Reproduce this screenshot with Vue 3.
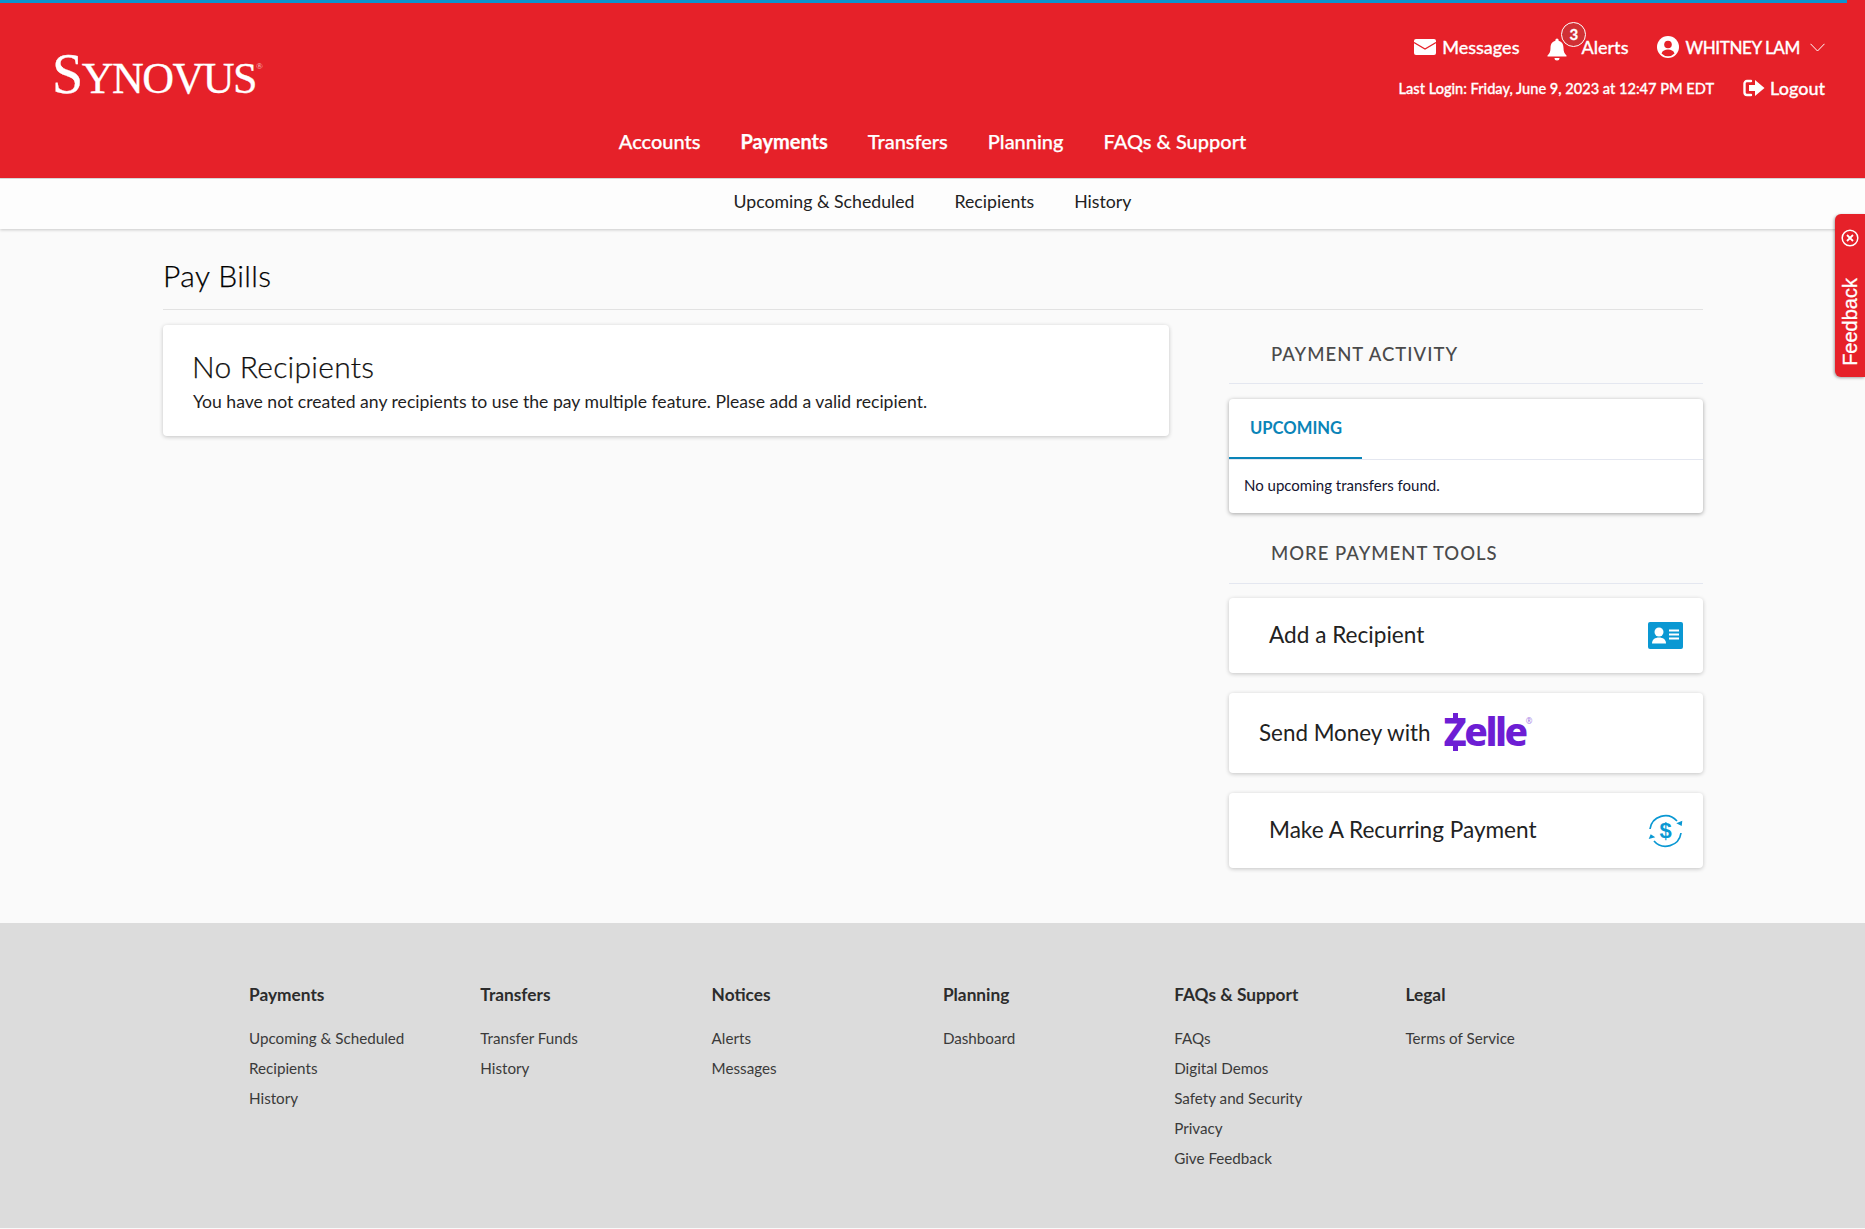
<script setup>
const navItems = ['Accounts', 'Payments', 'Transfers', 'Planning', 'FAQs & Support']
const subItems = ['Upcoming & Scheduled', 'Recipients', 'History']
const footerCols = [
  { title: 'Payments', links: ['Upcoming & Scheduled', 'Recipients', 'History'] },
  { title: 'Transfers', links: ['Transfer Funds', 'History'] },
  { title: 'Notices', links: ['Alerts', 'Messages'] },
  { title: 'Planning', links: ['Dashboard'] },
  { title: 'FAQs & Support', links: ['FAQs', 'Digital Demos', 'Safety and Security', 'Privacy', 'Give Feedback'] },
  { title: 'Legal', links: ['Terms of Service'] }
]
</script>

<template>
  <div class="page">
    <header class="header">
      <div class="top-strip"></div>
      <div class="header-top">
        <div class="logo"><span class="logo-big">S</span>YNOVUS<sup class="logo-reg">®</sup></div>
        <div class="account">
          <div class="account-row">
            <a class="util messages">
              <svg width="22" height="16" viewBox="0 0 22 16">
                <rect width="22" height="16" rx="2" fill="#fff" />
                <path d="M0 3.500 L11 10 L22 3.500" fill="none" stroke="#e62129" stroke-width="1.300" />
              </svg>
              Messages
            </a>
            <a class="util alerts">
              <svg class="bell" width="20" height="24" viewBox="0 0 20 24">
                <path d="M10 1.500a1.600 1.600 0 0 1 1.600 1.600v.7C15 4.600 16.500 7.500 16.500 11c0 3.800 1 5.500 3 7.500v1H.5v-1c2-2 3-3.700 3-7.500 0-3.500 1.500-6.400 4.900-7.200v-.7A1.600 1.600 0 0 1 10 1.500zM7.500 21h5a2.500 2.500 0 0 1-5 0z" fill="#fff" />
              </svg>
              <span class="badge">3</span>
              Alerts
            </a>
            <a class="util user">
              <svg width="22" height="22" viewBox="0 0 22 22">
                <circle cx="11" cy="11" r="11" fill="#fff" />
                <circle cx="11" cy="8.500" r="3.800" fill="#e62129" />
                <path d="M4.500 17.500c1-3 3.500-4 6.500-4s5.500 1 6.500 4a9 9 0 0 1-13 0z" fill="#e62129" />
              </svg>
              <span class="user-name">WHITNEY LAM</span>
              <svg class="chev" width="15" height="9" viewBox="0 0 15 9">
                <path d="M.5 .8 L7.500 8 L14.500 .8" fill="none" stroke="#fff" stroke-width="1" />
              </svg>
            </a>
          </div>
          <div class="account-row second">
            <span class="last-login">Last Login: Friday, June 9, 2023 at 12:47 PM EDT</span>
            <a class="util logout">
              <svg width="22" height="18" viewBox="0 0 22 18">
                <path d="M8 2H4a2.500 2.500 0 0 0-2.500 2.500v9A2.500 2.500 0 0 0 4 16h4" fill="none" stroke="#fff" stroke-width="2.400" stroke-linecap="round" />
                <path d="M6 6h6V1l9.500 8-9.500 8v-5H6z" fill="#fff" />
              </svg>
              Logout
            </a>
          </div>
        </div>
      </div>
      <nav class="main-nav">
        <a v-for="item in navItems" :key="item" :class="{ active: item === 'Payments' }">{{ item }}</a>
      </nav>
    </header>

    <nav class="sub-nav">
      <a v-for="item in subItems" :key="item">{{ item }}</a>
    </nav>

    <div class="feedback">
      <svg width="18" height="18" viewBox="0 0 18 18">
        <circle cx="9" cy="9" r="7.800" fill="none" stroke="#fff" stroke-width="1.500" />
        <path d="M6 6l6 6M12 6l-6 6" stroke="#fff" stroke-width="1.800" />
      </svg>
      <span class="feedback-text">Feedback</span>
    </div>

    <main class="main">
      <h1 class="page-title">Pay Bills</h1>
      <div class="columns">
        <section class="card empty">
          <h2>No Recipients</h2>
          <p>You have not created any recipients to use the pay multiple feature. Please add a valid recipient.</p>
        </section>

        <aside class="side">
          <h3 class="side-title first">PAYMENT ACTIVITY</h3>
          <div class="card activity">
            <div class="tabs"><span class="tab">UPCOMING</span></div>
            <div class="tab-body">No upcoming transfers found.</div>
          </div>

          <h3 class="side-title">MORE PAYMENT TOOLS</h3>
          <a class="card tool">
            <span>Add a Recipient</span>
            <svg class="tool-icon" width="35" height="27" viewBox="0 0 35 27">
              <rect width="35" height="27" rx="2" fill="#0a98d3" />
              <circle cx="11" cy="10" r="4.500" fill="#fff" />
              <path d="M4 21.500c0-4 3-6 7-6s7 2 7 6z" fill="#fff" />
              <path d="M21 8.500h10M21 12.500h10M21 16.500h10" stroke="#fff" stroke-width="2.200" />
            </svg>
          </a>
          <a class="card tool zelle-tool">
            <span>Send Money with</span>
            <span class="zelle"><span class="zelle-z">Z</span>elle<sup>®</sup></span>
          </a>
          <a class="card tool">
            <span>Make A Recurring Payment</span>
            <span class="recur tool-icon">
              <svg width="35" height="34" viewBox="0 0 35 34">
                <path d="M2 15A15.500 15.500 0 0 1 29 7M33 19A15.500 15.500 0 0 1 6 27" fill="none" stroke="#0a98d3" stroke-width="1.700" />
                <path d="M34.300 6.700L33.700 12L28.300 9.300zM.7 25L2.700 20.300L7.300 23.300z" fill="#0a98d3" />
              </svg>
              <span class="dollar">$</span>
            </span>
          </a>
        </aside>
      </div>
    </main>

    <footer class="footer">
      <div v-for="col in footerCols" :key="col.title" class="footer-col">
        <h4>{{ col.title }}</h4>
        <a v-for="link in col.links" :key="link">{{ link }}</a>
      </div>
    </footer>
  </div>
</template>

<style>
html, body {
  margin: 0;
  background: #fff;
}
</style>

<style scoped>
.page {
  position: relative;
  width: 100%;
  height: 1229px;
  overflow: hidden;
  display: flex;
  flex-direction: column;
  background: #fafafa;
  font-family: Lato, "Liberation Sans", sans-serif;
  color: #1f1f1f;
}

.header {
  height: 179px;
  box-sizing: border-box;
  background: #e62129;
  color: #fff;
  border-bottom: 1px solid #ddd;
}

.top-strip {
  height: 3px;
  margin-right: 18px;
  background: #0a94d0;
}

.header-top {
  display: flex;
  justify-content: space-between;
  height: 123px;
  padding: 0 40px 0 52px;
}

.logo {
  margin-top: 44px;
  font-family: "Liberation Serif", serif;
  font-size: 44px;
  line-height: 54px;
  height: 54px;
  letter-spacing: -1.500px;
  -webkit-text-stroke: 0.3px #fff;
}

.logo-big {
  font-size: 56px;
}

.logo-reg {
  font-size: 9px;
  vertical-align: 24px;
  line-height: 0;
  opacity: 0.7;
  letter-spacing: 0;
  -webkit-text-stroke: 0;
}

.account {
  display: flex;
  flex-direction: column;
  align-items: flex-end;
  -webkit-text-stroke: 0.3px #fff;
}

.account-row {
  display: flex;
  align-items: center;
  height: 28px;
  margin-top: 30px;
  font-size: 18px;
  font-weight: 500;
}

.account-row.second {
  margin-top: 13px;
}

.util {
  display: flex;
  align-items: center;
  gap: 6px;
}

.alerts {
  position: relative;
  gap: 14px;
  margin-left: 28px;
}

.bell {
  margin-top: 3px;
}

.badge {
  position: absolute;
  left: 14px;
  top: -12px;
  width: 23px;
  height: 23px;
  border: 1px solid #fff;
  border-radius: 50%;
  background: #d03034;
  font-size: 15px;
  font-weight: 700;
  line-height: 23px;
  text-align: center;
}

.user {
  margin-left: 29px;
}

.user-name {
  font-size: 17px;
  letter-spacing: -0.4px;
}

.chev {
  margin-left: 4px;
}

.last-login {
  font-size: 14.600px;
  margin-right: 29px;
}

.logout {
  gap: 5px;
}

.main-nav {
  display: flex;
  justify-content: center;
  gap: 40px;
  font-size: 20px;
  font-weight: 500;
  -webkit-text-stroke: 0.25px #fff;
}

.main-nav a {
  line-height: 30px;
}

.main-nav a.active {
  font-weight: 700;
}

.sub-nav {
  display: flex;
  justify-content: center;
  gap: 40px;
  height: 50px;
  padding-bottom: 6px;
  box-sizing: border-box;
  align-items: center;
  background: #fdfdfd;
  box-shadow: 0 1px 3px rgba(0, 0, 0, 0.2);
  font-size: 17.700px;
  color: #222;
}

.feedback {
  position: absolute;
  right: 0;
  top: 214px;
  width: 30px;
  height: 163px;
  display: flex;
  flex-direction: column;
  align-items: center;
  padding-top: 15px;
  box-sizing: border-box;
  gap: 31px;
  background: #e62129;
  border-radius: 6px 0 0 6px;
  box-shadow: -1px 1px 3px rgba(0, 0, 0, 0.35);
  color: #fff;
}

.feedback-text {
  writing-mode: vertical-rl;
  transform: rotate(180deg);
  font-family: "Liberation Sans", sans-serif;
  font-size: 20px;
  line-height: 26px;
  -webkit-text-stroke: 0.3px #fff;
}

.main {
  flex: 1;
  padding: 0 162px 0 163px;
}

.page-title {
  margin: 0;
  height: 81px;
  box-sizing: border-box;
  padding-top: 26px;
  border-bottom: 1px solid #e2e2e2;
  font-size: 30px;
  font-weight: 300;
  line-height: 40px;
  letter-spacing: 0.4px;
  color: #000;
  -webkit-text-stroke: 0.25px #000;
}

.columns {
  display: grid;
  grid-template-columns: 1006px 474px;
  column-gap: 60px;
  align-items: start;
}

.card {
  display: block;
  background: #fff;
  border-radius: 4px;
  box-shadow: 0 1px 4px rgba(0, 0, 0, 0.22);
}

.empty {
  margin-top: 15px;
  height: 111px;
  box-sizing: border-box;
  padding: 23px 30px 0 30px;
}

.empty h2 {
  margin: 0 0 0 -1px;
  font-size: 30px;
  font-weight: 300;
  line-height: 36px;
  letter-spacing: 0.25px;
  color: #111;
  -webkit-text-stroke: 0.25px #111;
}

.empty p {
  margin: 5px 0 0;
  font-size: 17.600px;
  line-height: 26px;
}

.side-title {
  margin: 0;
  padding: 26px 0 0 42px;
  height: 71px;
  box-sizing: border-box;
  border-bottom: 1px solid #e4e7f0;
  font-size: 18.500px;
  font-weight: 500;
  line-height: 28px;
  letter-spacing: 1px;
  color: #4a4a4a;
}

.side-title.first {
  padding-top: 30px;
  height: 74px;
}

.activity {
  margin: 15px 0 0;
  height: 114px;
  box-shadow: 0 1px 4px rgba(0, 0, 0, 0.35);
}

.tabs {
  height: 61px;
  box-sizing: border-box;
  border-bottom: 1px solid #e4e7f0;
}

.tab {
  display: block;
  width: 133px;
  height: 60px;
  box-sizing: border-box;
  padding: 15px 0 0 21px;
  border-bottom: 2px solid #0a84b8;
  font-size: 16.600px;
  font-weight: 700;
  line-height: 28px;
  color: #0a84b8;
}

.tab-body {
  padding: 14px 0 0 15px;
  font-size: 15px;
  line-height: 22px;
  color: #151530;
}

.tool {
  display: flex;
  align-items: center;
  justify-content: space-between;
  height: 75px;
  margin-top: 20px;
  padding: 0 20px 2px 40px;
  box-sizing: border-box;
  font-size: 22.600px;
  color: #222;
}

.tool-icon {
  margin-top: 2px;
}

.side-title + .tool {
  margin-top: 14px;
}

.zelle-tool {
  height: 80px;
  justify-content: flex-start;
  gap: 13px;
  padding-left: 30px;
  font-size: 22.400px;
}

.zelle {
  position: relative;
  margin-top: -3px;
  font-family: "Noto Sans", sans-serif;
  font-size: 39px;
  font-weight: 800;
  line-height: 44px;
  letter-spacing: -2.500px;
  color: #6d1ed4;
}

.zelle sup {
  font-size: 8px;
  font-weight: 400;
  vertical-align: 22px;
  line-height: 0;
  letter-spacing: 0;
  opacity: 0.6;
}

.zelle-z {
  position: relative;
  display: inline-block;
}

.zelle-z::before,
.zelle-z::after {
  content: "";
  position: absolute;
  left: 9px;
  width: 5px;
  height: 7px;
  background: #6d1ed4;
}

.zelle-z::before {
  top: 4px;
}

.zelle-z::after {
  top: 35px;
}

.recur {
  position: relative;
  display: flex;
  width: 35px;
  height: 34px;
  align-items: center;
  justify-content: center;
}

.recur svg {
  position: absolute;
  inset: 0;
}

.dollar {
  font-family: "Liberation Sans", sans-serif;
  font-size: 22px;
  font-weight: 700;
  color: #0a98d3;
}

.footer {
  height: 305px;
  margin-bottom: 1px;
  box-sizing: border-box;
  display: grid;
  grid-template-columns: repeat(6, 231.3px);
  padding: 58px 0 0 249px;
  background: #dcdcdc;
  color: #3a3a3a;
}

.footer-col {
  display: flex;
  flex-direction: column;
  align-items: flex-start;
}

.footer-col h4 {
  margin: 0 0 14px;
  font-size: 17.300px;
  font-weight: 700;
  line-height: 28px;
  color: #2c2c2c;
}

.footer-col a {
  font-size: 15.200px;
  line-height: 30px;
}
</style>
